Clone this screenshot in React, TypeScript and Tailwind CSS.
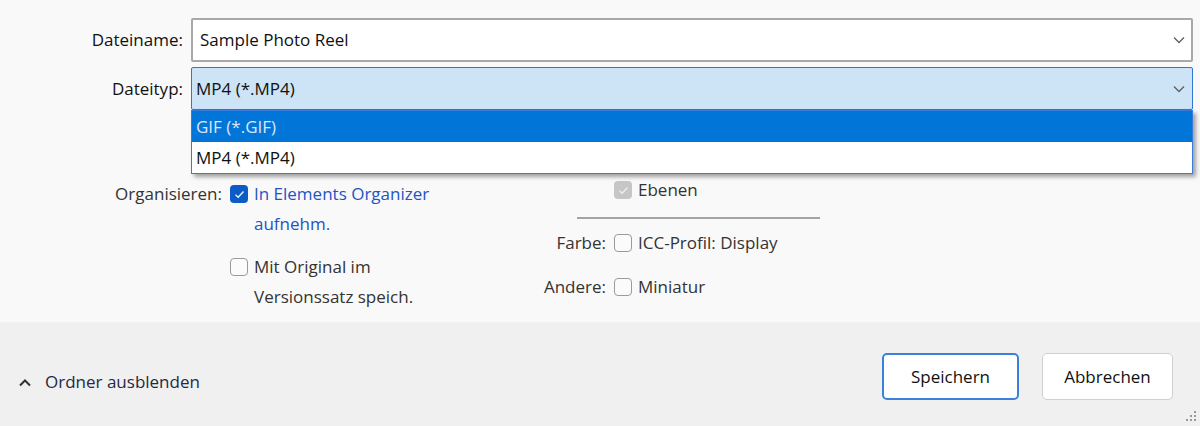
import React from "react";

const Chevron = () => (
  <svg width="12" height="8" viewBox="0 0 12 8" className="shrink-0">
    <path d="M1 1.5 L6 6.5 L11 1.5" fill="none" stroke="#5f5f5f" strokeWidth="1.3" />
  </svg>
);

const Box = ({ checked = false, disabled = false }: { checked?: boolean; disabled?: boolean }) => {
  if (checked && !disabled)
    return (
      <div className="w-[18px] h-[18px] rounded-[4px] bg-[#0b5cc4] flex items-center justify-center shrink-0">
        <svg width="11" height="9" viewBox="0 0 11 9">
          <path d="M1.5 4.8 L4.2 7.3 L9.5 1.5" fill="none" stroke="#e8f0fb" strokeWidth="1.4" />
        </svg>
      </div>
    );
  if (checked && disabled)
    return (
      <div className="w-[18px] h-[18px] rounded-[4px] bg-[#c6c6c6] flex items-center justify-center shrink-0">
        <svg width="11" height="9" viewBox="0 0 11 9">
          <path d="M1.5 4.8 L4.2 7.3 L9.5 1.5" fill="none" stroke="#eeeeee" strokeWidth="1.4" />
        </svg>
      </div>
    );
  return <div className="w-[18px] h-[18px] rounded-[4px] border border-[#9a9a9a] bg-[#fbfbfb] shrink-0" />;
};

export default function App() {
  return (
    <div
      className="w-[1200px] h-[426px] overflow-hidden flex flex-col text-[17px] text-[#111111]"
      style={{ fontFamily: '"Open Sans", "Noto Sans", sans-serif' }}
    >
      {/* top panel */}
      <div className="h-[322px] bg-[#f9f9f9] pt-[18px] pr-[7px] flex flex-col">
        <div className="flex items-center gap-[8px] h-[44px]">
          <div className="w-[183px] text-right">Dateiname:</div>
          <div className="flex-1 h-[44px] bg-white border-2 border-[#a8a8a8] rounded-[2px] flex items-center pl-[7px] pr-[6px] justify-between">
            <span>Sample Photo Reel</span>
            <Chevron />
          </div>
        </div>
        <div className="flex items-center gap-[8px] h-[43px] mt-[5px]">
          <div className="w-[183px] text-right">Dateityp:</div>
          <div className="flex-1 relative h-[43px]">
            <div className="h-[43px] bg-[#cde4f7] border border-[#2f74d6] rounded-[2px] flex items-center pl-[4px] pr-[7px] justify-between">
              <span>MP4 (*.MP4)</span>
              <Chevron />
            </div>
            <div className="absolute left-0 right-0 top-[43px] z-10 border border-[#3a7ad8] bg-white shadow-[3px_3px_4px_rgba(0,0,0,0.35)]">
              <div className="h-[31px] bg-[#0275d8] text-[#dbe7f7] flex items-center pl-[4px]">GIF (*.GIF)</div>
              <div className="h-[31px] bg-white flex items-center pl-[4px]">MP4 (*.MP4)</div>
            </div>
          </div>
        </div>

        {/* options */}
        <div className="flex mt-[65px]">
          <div className="w-[500px] pt-[4px] flex flex-col">
            <div className="flex">
              <div className="w-[222px] text-right leading-[30px] text-[#333333]">Organisieren:</div>
              <div className="ml-[8px] mt-[6px]"><Box checked /></div>
              <div className="ml-[6px] leading-[30px] text-[#2453c4]">
                In Elements Organizer
                <br />
                aufnehm.
              </div>
            </div>
            <div className="flex mt-[13px]">
              <div className="w-[222px]" />
              <div className="ml-[8px] mt-[6px]"><Box /></div>
              <div className="ml-[6px] leading-[30px] text-[#333333]">
                Mit Original im
                <br />
                Versionssatz speich.
              </div>
            </div>
          </div>

          <div className="flex flex-col">
            <div className="flex h-[30px] items-center">
              <div className="w-[106px]" />
              <div className="ml-[8px]"><Box checked disabled /></div>
              <div className="ml-[6px] text-[#333333]">Ebenen</div>
            </div>
            <div className="ml-[77px] w-[243px] h-[2px] bg-[#a4a4a4] mt-[12px]" />
            <div className="flex h-[30px] items-center mt-[9px]">
              <div className="w-[106px] text-right text-[#333333]">Farbe:</div>
              <div className="ml-[8px]"><Box /></div>
              <div className="ml-[6px] text-[#333333]">ICC-Profil: Display</div>
            </div>
            <div className="flex h-[30px] items-center mt-[14px]">
              <div className="w-[106px] text-right text-[#333333]">Andere:</div>
              <div className="ml-[8px]"><Box /></div>
              <div className="ml-[6px] text-[#333333]">Miniatur</div>
            </div>
          </div>
        </div>
      </div>

      {/* bottom panel */}
      <div className="flex-1 bg-[#f0f0f0] relative flex items-start pl-[18px] pr-[27px] pt-[31px]">
        <div className="flex items-center mt-[17px] h-[24px]">
          <svg width="14" height="9" viewBox="0 0 14 9">
            <path d="M2 7.5 L7 2.5 L12 7.5" fill="none" stroke="#333" strokeWidth="2" />
          </svg>
          <span className="ml-[13px] text-[#1f2a44]">Ordner ausblenden</span>
        </div>
        <div className="flex-1" />
        <button className="w-[137px] h-[47px] bg-white border-2 border-[#3d80dc] rounded-[5px] text-[#111111]">
          Speichern
        </button>
        <button className="ml-[23px] w-[131px] h-[47px] bg-white border border-[#cfcfcf] rounded-[5px] text-[#111111]">
          Abbrechen
        </button>
        <svg width="14" height="14" viewBox="0 0 14 14" className="absolute right-[3px] bottom-[3px]">
          {[
            [11, 2],
            [11, 6],
            [7, 6],
            [11, 10],
            [7, 10],
            [3, 10],
          ].map(([x, y], i) => (
            <rect key={i} x={x} y={y} width="2" height="2" fill="#9a9a9a" />
          ))}
        </svg>
      </div>
    </div>
  );
}
